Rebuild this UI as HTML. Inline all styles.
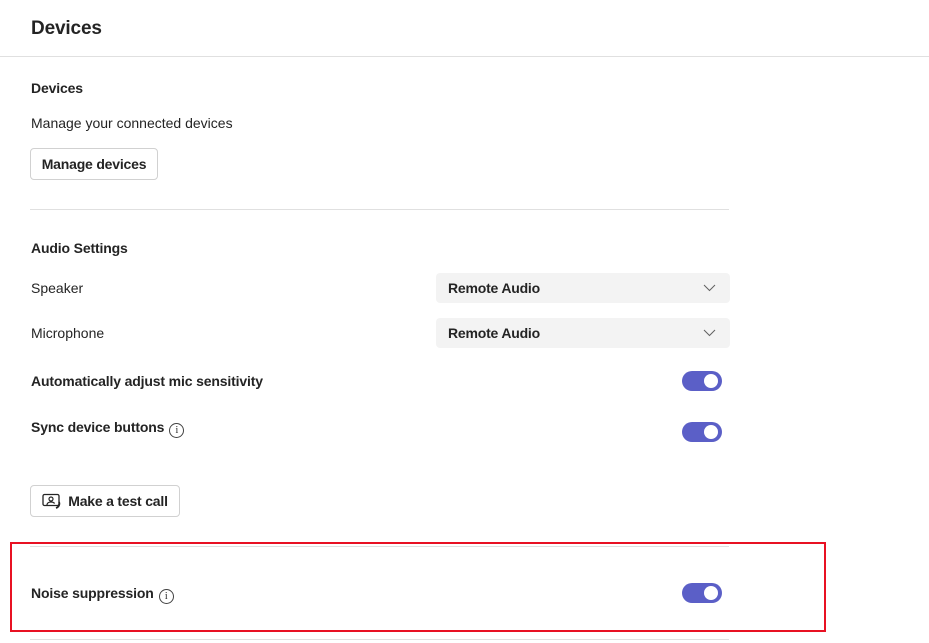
<!DOCTYPE html>
<html><head><style>
*{margin:0;padding:0;box-sizing:border-box}
body{width:929px;height:643px;background:#fff;font-family:"Liberation Sans",sans-serif;color:#242424;position:relative;overflow:hidden;font-size:14px}
.a{position:absolute;white-space:nowrap}
.b{font-weight:bold;letter-spacing:-0.15px}
.hr{position:absolute;height:1px;background:#e0e0e0}
.btn{position:absolute;border:1px solid #d1d1d1;border-radius:4px;background:#fff;font-weight:bold;font-size:14px;display:flex;align-items:center;justify-content:center;letter-spacing:-0.2px}
.sel{position:absolute;left:436px;width:294px;height:30px;background:#f3f3f3;border-radius:4px;font-weight:bold;padding-left:12px;line-height:30px;letter-spacing:-0.2px}
.sel svg{position:absolute;right:14px;top:11px}
.tg{position:absolute;left:682px;width:40px;height:20px;border-radius:10px;background:#5b5fc7}
.tg::after{content:"";position:absolute;right:4px;top:3px;width:14px;height:14px;border-radius:50%;background:#fff}
.i{display:inline-block;width:15px;height:15px;border:1px solid #424242;border-radius:50%;font-size:10px;text-align:center;line-height:13px;font-weight:normal;vertical-align:-1px;margin-left:5px;font-family:"Liberation Serif",serif}
</style></head><body>
<div class="a b" style="left:31px;top:18px;font-size:19px">Devices</div>
<div class="hr" style="left:0;top:56px;width:929px"></div>
<div class="a b" style="left:31px;top:80px">Devices</div>
<div class="a" style="left:31px;top:115px">Manage your connected devices</div>
<div class="btn" style="left:30px;top:148px;width:128px;height:32px">Manage devices</div>
<div class="hr" style="left:30px;top:209px;width:699px"></div>
<div class="a b" style="left:31px;top:240px">Audio Settings</div>
<div class="a" style="left:31px;top:280px">Speaker</div>
<div class="sel" style="top:273px">Remote Audio<svg width="13" height="8"><path d="M1 1l5.5 5.5L12 1" stroke="#616161" fill="none"/></svg></div>
<div class="a" style="left:31px;top:325px">Microphone</div>
<div class="sel" style="top:318px">Remote Audio<svg width="13" height="8"><path d="M1 1l5.5 5.5L12 1" stroke="#616161" fill="none"/></svg></div>
<div class="a b" style="left:31px;top:373px">Automatically adjust mic sensitivity</div>
<div class="tg" style="top:371px"></div>
<div class="a b" style="left:31px;top:419px">Sync device buttons<span class="i">i</span></div>
<div class="tg" style="top:422px"></div>
<div class="btn" style="left:30px;top:485px;width:150px;height:32px"><svg width="20" height="16" style="margin-right:6px" viewBox="0 0 20 16"><rect x="1" y="1.5" width="16" height="11" rx="1.5" fill="none" stroke="#242424" stroke-width="1.3"/><circle cx="9" cy="6" r="2" fill="none" stroke="#242424" stroke-width="1.2"/><path d="M5 12c0-2 2-3 4-3s3 .6 3.6 1.5" fill="none" stroke="#242424" stroke-width="1.2"/><path d="M17 9c1 2 0 5-3 6" stroke="#242424" stroke-width="1.8" fill="none"/></svg>Make a test call</div>
<div class="hr" style="left:30px;top:546px;width:699px"></div>
<div class="a b" style="left:31px;top:585px">Noise suppression<span class="i">i</span></div>
<div class="tg" style="top:583px"></div>
<div class="hr" style="left:30px;top:639px;width:699px"></div>
<div style="position:absolute;left:10px;top:542px;width:816px;height:90px;border:2px solid #e81123"></div>
</body></html>
